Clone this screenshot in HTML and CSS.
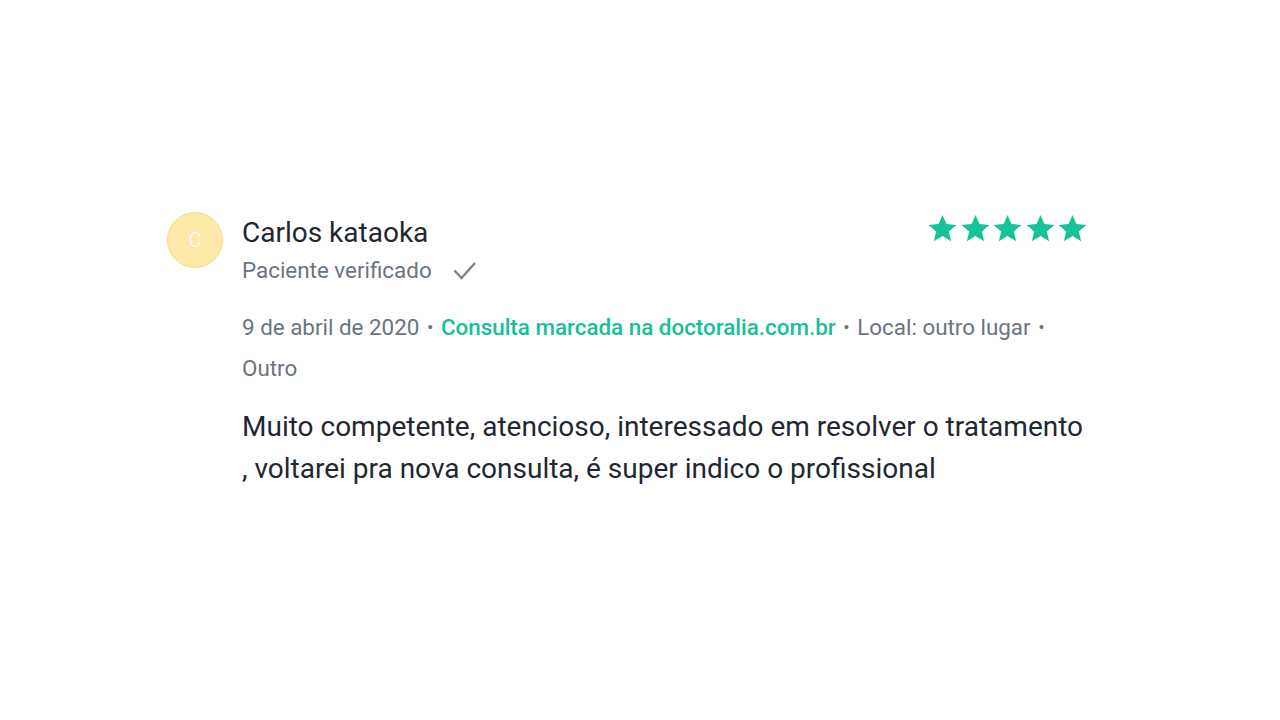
FILE: index.html
```html
<!DOCTYPE html>
<html lang="pt-BR">
<head>
<meta charset="utf-8">
<title>Opinião</title>
<link rel="stylesheet" href="styles.css">
</head>
<body>
<div class="review">
  <div class="avatar">C</div>
  <div class="content">
    <div class="head">
      <div class="who">
        <div class="name">Carlos kataoka</div>
        <div class="verified">Paciente verificado
          <svg class="check" width="24" height="24" viewBox="0 0 24 24"><path d="M2.5 12.5l7 7.5L23 5" fill="none" stroke="#7a8490" stroke-width="2.4"/></svg>
        </div>
      </div>
      <div class="stars">
        <svg viewBox="0 0 24 24"><path d="M12 1.5l3.1 7.1 7.7.6-5.9 5.1 1.8 7.6L12 17.9l-6.7 4 1.8-7.6-5.9-5.1 7.7-.6z"/></svg>
        <svg viewBox="0 0 24 24"><path d="M12 1.5l3.1 7.1 7.7.6-5.9 5.1 1.8 7.6L12 17.9l-6.7 4 1.8-7.6-5.9-5.1 7.7-.6z"/></svg>
        <svg viewBox="0 0 24 24"><path d="M12 1.5l3.1 7.1 7.7.6-5.9 5.1 1.8 7.6L12 17.9l-6.7 4 1.8-7.6-5.9-5.1 7.7-.6z"/></svg>
        <svg viewBox="0 0 24 24"><path d="M12 1.5l3.1 7.1 7.7.6-5.9 5.1 1.8 7.6L12 17.9l-6.7 4 1.8-7.6-5.9-5.1 7.7-.6z"/></svg>
        <svg viewBox="0 0 24 24"><path d="M12 1.5l3.1 7.1 7.7.6-5.9 5.1 1.8 7.6L12 17.9l-6.7 4 1.8-7.6-5.9-5.1 7.7-.6z"/></svg>
      </div>
    </div>
    <div class="meta">9 de abril de 2020 <span class="dot">•</span> <span class="booked">Consulta marcada na doctoralia.com.br</span> <span class="dot">•</span> Local: outro lugar <span class="dot">•</span> Outro</div>
    <p class="text">Muito competente, atencioso, interessado em resolver o tratamento , voltarei pra nova consulta, é super indico o profissional</p>
  </div>
</div>
</body>
</html>
```
FILE: styles.css
```css
html, body {
  margin: 0;
  padding: 0;
  background: #ffffff;
}
body {
  font-family: Roboto, "Noto Sans", Arial, sans-serif;
  color: #1f2733;
}
.review {
  display: flex;
  gap: 19px;
  width: 921px;
  margin: 212px 0 0 167px;
}
.avatar {
  flex: none;
  width: 54px;
  height: 54px;
  border-radius: 50%;
  background: #fdeaa9;
  border: 1px solid #f5dd8c;
  color: #ffffff;
  font-size: 20px;
  display: flex;
  align-items: center;
  justify-content: center;
}
.content {
  flex: 1;
  padding-top: 4px;
}
.head {
  display: flex;
  justify-content: space-between;
  align-items: flex-start;
}
.name {
  font-size: 28px;
  line-height: 33px;
  color: #1f2733;
}
.verified {
  margin-top: 8px;
  font-size: 22.4px;
  line-height: 26px;
  color: #6a7482;
  display: flex;
  align-items: center;
  gap: 20px;
}
.check {
  display: block;
}
.stars {
  display: flex;
  gap: 1.5px;
  margin-top: -3px;
}
.stars svg {
  width: 31px;
  height: 31px;
  fill: #14c39a;
}
.meta {
  margin-top: 24px;
  font-size: 22.4px;
  line-height: 41px;
  color: #6a7482;
  width: 830px;
}
.dot {
  font-size: 19px;
  vertical-align: 1px;
  margin: 0 2px;
}
.booked {
  color: #14bf99;
  font-weight: 500;
}
.text {
  margin: 17px 0 0;
  font-size: 28px;
  line-height: 42px;
  color: #1f2733;
  width: 843px;
}
```
